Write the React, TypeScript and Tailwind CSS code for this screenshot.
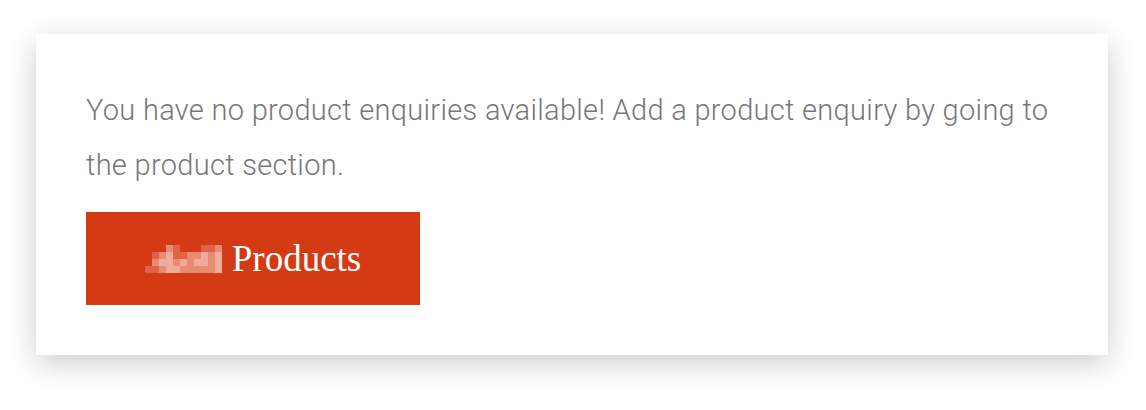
const mosaic: number[][] = [
  [0, 0, 0, 2, 1, 0, 0, 0, 1, 1, 2],
  [0, 1, 2, 3, 1, 1, 2, 2, 3, 2, 3],
  [0, 2, 3, 3, 2, 3, 2, 3, 3, 2, 3],
  [1, 1, 2, 3, 3, 2, 2, 2, 2, 2, 3],
];

const tones = ['#d43a14', '#e06247', '#e98a73', '#f0ab9b'];

function Mosaic() {
  return (
    <svg width="77" height="28" viewBox="0 0 77 28" aria-hidden="true">
      {mosaic.map((row, y) =>
        row.map((v, x) => (
          <rect key={`${x}-${y}`} x={x * 7} y={y * 7} width="7" height="7" fill={tones[v]} />
        ))
      )}
    </svg>
  );
}

export default function App() {
  return (
    <div className="min-h-screen bg-white pt-[34px] px-[36px]">
      <div className="w-[1072px] bg-white px-[50px] pt-[49px] pb-[50px] shadow-[0_8px_28px_rgba(0,0,0,0.2)]">
        <p
          className="text-[29px] leading-[55px] text-[#777777] font-light tracking-[0.3px]"
          style={{ fontFamily: 'Roboto, "Liberation Sans", sans-serif' }}
        >
          You have no product enquiries available! Add a product enquiry by going to the product section.
        </p>
        <button className="mt-[19px] flex h-[93px] w-[334px] items-center justify-center gap-[10px] bg-[#d43a14] text-white">
          <Mosaic />
          <span
            className="text-[37px] leading-none"
            style={{ fontFamily: '"Liberation Serif", serif' }}
          >
            Products
          </span>
        </button>
      </div>
    </div>
  );
}
